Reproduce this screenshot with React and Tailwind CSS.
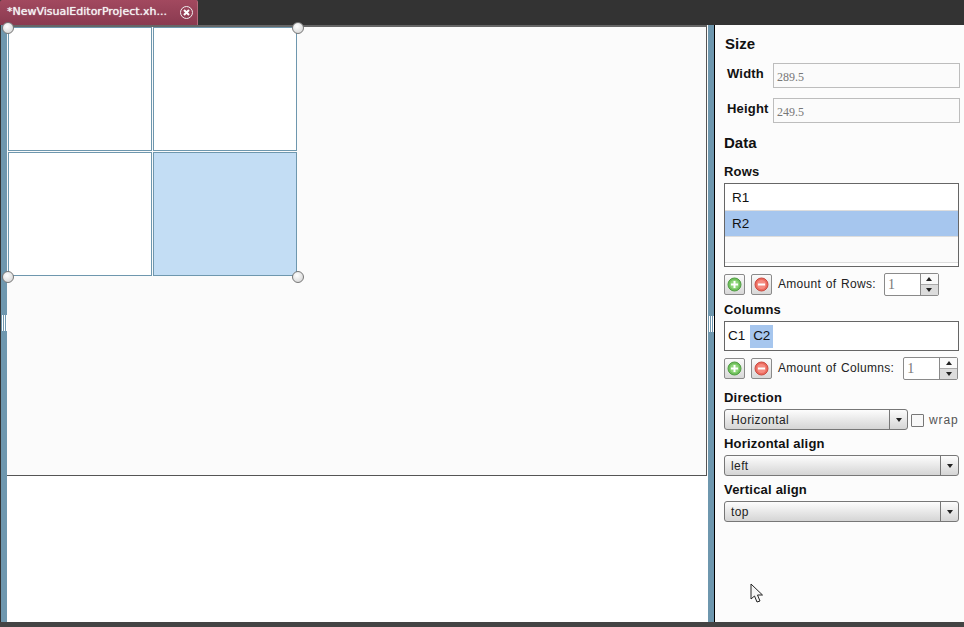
import React from "react";

const sans = "font-['Liberation_Sans',Arial,sans-serif]";

const Handle = ({ className }) => (
  <div
    className={`absolute w-[12px] h-[12px] rounded-full border border-[#777] bg-[radial-gradient(circle_at_40%_35%,#ffffff,#cfcfcf)] ${className}`}
  />
);

const Grip = () => (
  <div className="flex gap-px w-[5px] h-[16px] overflow-hidden">
    <div className="w-px bg-white" />
    <div className="w-px bg-white" />
    <div className="w-px bg-white" />
  </div>
);

const Cell = ({ selected }) => (
  <div className={`border border-[#6e97ae] ${selected ? "bg-[#c3ddf4]" : "bg-white"}`} />
);

const Heading = ({ children, className = "" }) => (
  <div className={`text-[13px] leading-[16px] font-bold tracking-[0.2px] text-[#111] ${className}`}>{children}</div>
);

const RoundButton = ({ kind }) => {
  const add = kind === "add";
  return (
    <button className="w-[21px] h-[21px] rounded-[2px] border border-[#8a8a8a] bg-gradient-to-b from-[#fbfbfb] to-[#d8d8d8] flex items-center justify-center shrink-0">
      <svg width="15" height="15" viewBox="0 0 15 15">
        <circle cx="7.5" cy="7.5" r="6.5" fill={add ? "#6fbf5b" : "#ec6a5e"} stroke={add ? "#4f9c42" : "#c94c42"} />
        <circle cx="7.5" cy="7.5" r="4.6" fill={add ? "#8ed67a" : "#f58b80"} />
        <rect x="4" y="6.5" width="7" height="2" fill="#fff" />
        {add && <rect x="6.5" y="4" width="2" height="7" fill="#fff" />}
      </svg>
    </button>
  );
};

const Spinner = ({ className = "" }) => (
  <div className={`flex h-[23px] w-[55px] rounded-[2px] border border-[#8a8a8a] bg-white ${className}`}>
    <div className="flex-1 pl-[3px] pt-[3px] text-[14px] leading-[16px] text-[#777] font-['Liberation_Serif',serif]">1</div>
    <div className="w-[18px] flex flex-col border-l border-[#8a8a8a]">
      <div className="flex-1 flex items-center justify-center bg-[#fafafa]">
        <div className="w-0 h-0 border-x-[3.5px] border-x-transparent border-b-[4px] border-b-[#222]" />
      </div>
      <div className="flex-1 flex items-center justify-center bg-[#dcdcdc] border-t border-[#aaa]">
        <div className="w-0 h-0 border-x-[3.5px] border-x-transparent border-t-[4px] border-t-[#222]" />
      </div>
    </div>
  </div>
);

const Amount = ({ label, spinnerClass }) => (
  <div className="flex items-center h-[23px]">
    <RoundButton kind="add" />
    <div className="w-[6px]" />
    <RoundButton kind="remove" />
    <span className="ml-[6px] mb-[2px] text-[12px] tracking-[0.3px] [word-spacing:1px] text-[#222]">{label}</span>
    <Spinner className={spinnerClass} />
  </div>
);

const Select = ({ value, className = "" }) => (
  <div className={`flex h-[21px] rounded-[3px] border border-[#777] bg-gradient-to-b from-[#fdfdfd] to-[#d5d5d5] ${className}`}>
    <div className="flex-1 pl-[6px] text-[12px] leading-[20px] tracking-[0.4px] text-[#222]">{value}</div>
    <div className="w-[18px] border-l border-[#777] flex items-center justify-center">
      <div className="w-0 h-0 border-x-[3.5px] border-x-transparent border-t-[4px] border-t-[#222]" />
    </div>
  </div>
);

const SizeRow = ({ label, value }) => (
  <div className="flex items-start h-[25px] pl-[3px]">
    <div className="w-[46px] shrink-0 text-[13px] leading-[21px] font-bold tracking-[0.2px] text-[#111]">{label}</div>
    <div className="w-[187px] h-[25px] shrink-0 border border-[#bdbdbd] bg-[#fbfbfb] pl-[3px] pt-[5px] text-[12px] leading-[16px] text-[#777] font-['Liberation_Serif',serif]">
      {value}
    </div>
  </div>
);

const App = () => {
  return (
    <div className={`w-[964px] h-[627px] flex flex-col overflow-hidden bg-[#333] ${sans}`}>
      {/* tab bar */}
      <div className="h-[25px] shrink-0 flex items-start bg-[#333]">
        <div className="w-[198px] h-[25px] flex items-center rounded-t-[2px] bg-gradient-to-b from-[#a2495f] to-[#8a3a50] border-r border-[#b56a7c]">
          <span className="w-[172px] shrink-0 pl-[7px] text-[11px] text-[#f2f2f2] whitespace-nowrap font-['DejaVu_Sans',sans-serif] [text-shadow:0_0_1px_#fff]">
            *NewVisualEditorProject.xh...
          </span>
          <div className="ml-[8px] w-[13px] h-[13px] rounded-full border border-[#eee] flex items-center justify-center">
            <svg width="7" height="7" viewBox="0 0 7 7">
              <path d="M1 1 L6 6 M6 1 L1 6" stroke="#fff" strokeWidth="2" />
            </svg>
          </div>
        </div>
      </div>

      {/* body */}
      <div className="h-[597px] shrink-0 flex bg-white">
        <div className="w-px shrink-0 bg-[#333]" />
        <div className="w-[6px] shrink-0 bg-[#6e97ae] flex items-center justify-center pb-[1px]">
          <Grip />
        </div>

        {/* editor */}
        <div className="w-[701px] shrink-0 flex flex-col bg-white">
          <div className="relative h-[451px] w-[700px] border-t-2 border-t-[#666] border-r border-b border-[#555] bg-[#fbfbfb]">
            <div className="ml-px w-[289px] h-[249px] grid grid-cols-[144px_144px] grid-rows-[124px_124px] gap-px">
              <Cell />
              <Cell />
              <Cell />
              <Cell selected />
            </div>
            <Handle className="left-[-5px] top-[-5px]" />
            <Handle className="left-[284.5px] top-[-5px]" />
            <Handle className="left-[-5px] top-[243.5px]" />
            <Handle className="left-[284.5px] top-[243.5px]" />
          </div>
        </div>

        <div className="w-[6px] shrink-0 bg-[#6e97ae] flex items-center justify-center">
          <Grip />
        </div>
        <div className="w-px shrink-0 bg-black" />

        {/* properties panel */}
        <div className="relative flex-1 min-w-0 pl-[9px] pr-[5px] bg-[#fcfcfc]">
          <div className="pt-[11px] pl-px text-[15px] leading-[16px] font-bold text-[#111]">Size</div>
          <div className="mt-[11px]">
            <SizeRow label="Width" value="289.5" />
          </div>
          <div className="mt-[10px]">
            <SizeRow label="Height" value="249.5" />
          </div>
          <div className="mt-[12px] text-[15px] leading-[16px] font-bold text-[#111]">Data</div>

          <Heading className="mt-[13px]">Rows</Heading>
          <div className="mt-[3px] h-[84px] w-[235px] border border-[#666] bg-white">
            <div className="h-[27px] pl-[7px] text-[13.5px] leading-[28px] text-[#111] border-b border-[#ddd]">R1</div>
            <div className="h-[26px] pl-[7px] text-[13.5px] leading-[25px] text-[#111] bg-[#a6c6ee] border-b border-[#ddd]">R2</div>
            <div className="h-[26px] bg-[#fbfbfb] border-b border-[#ddd]" />
          </div>
          <div className="mt-[6px]">
            <Amount label="Amount of Rows:" spinnerClass="ml-[8px]" />
          </div>

          <Heading className="mt-[6px]">Columns</Heading>
          <div className="mt-[3px] h-[30px] w-[235px] border border-[#666] bg-white flex items-center pl-[3px] text-[13.5px] text-[#111]">
            <span>C1</span>
            <span className="ml-[5px] h-[23px] w-[23px] leading-[21px] text-center bg-[#a6c6ee]">C2</span>
          </div>
          <div className="mt-[6px]">
            <Amount label="Amount of Columns:" spinnerClass="ml-[9px]" />
          </div>

          <Heading className="mt-[10px]">Direction</Heading>
          <div className="mt-[3px] flex items-center">
            <Select value="Horizontal" className="w-[184px]" />
            <div className="ml-[3px] mt-[2px] w-[13px] h-[13px] border border-[#777] bg-[#f8f8f8] rounded-[1px]" />
            <span className="ml-[5px] text-[12px] tracking-[0.9px] text-[#555]">wrap</span>
          </div>

          <Heading className="mt-[6px]">Horizontal align</Heading>
          <Select value="left" className="mt-[3px] w-[235px]" />

          <Heading className="mt-[6px]">Vertical align</Heading>
          <Select value="top" className="mt-[3px] w-[235px]" />

          {/* mouse pointer */}
          <svg className="absolute left-[35px] top-[558px]" width="15" height="22" viewBox="0 0 15 22">
            <path d="M1 1 L1 16 L4.5 13 L7 19 L10 18 L7.5 12 L12.5 12 Z" fill="#f4f4f4" stroke="#222" strokeWidth="1" />
          </svg>
        </div>
      </div>
      <div className="flex-1 bg-[#444]" />
    </div>
  );
};

export default App;
